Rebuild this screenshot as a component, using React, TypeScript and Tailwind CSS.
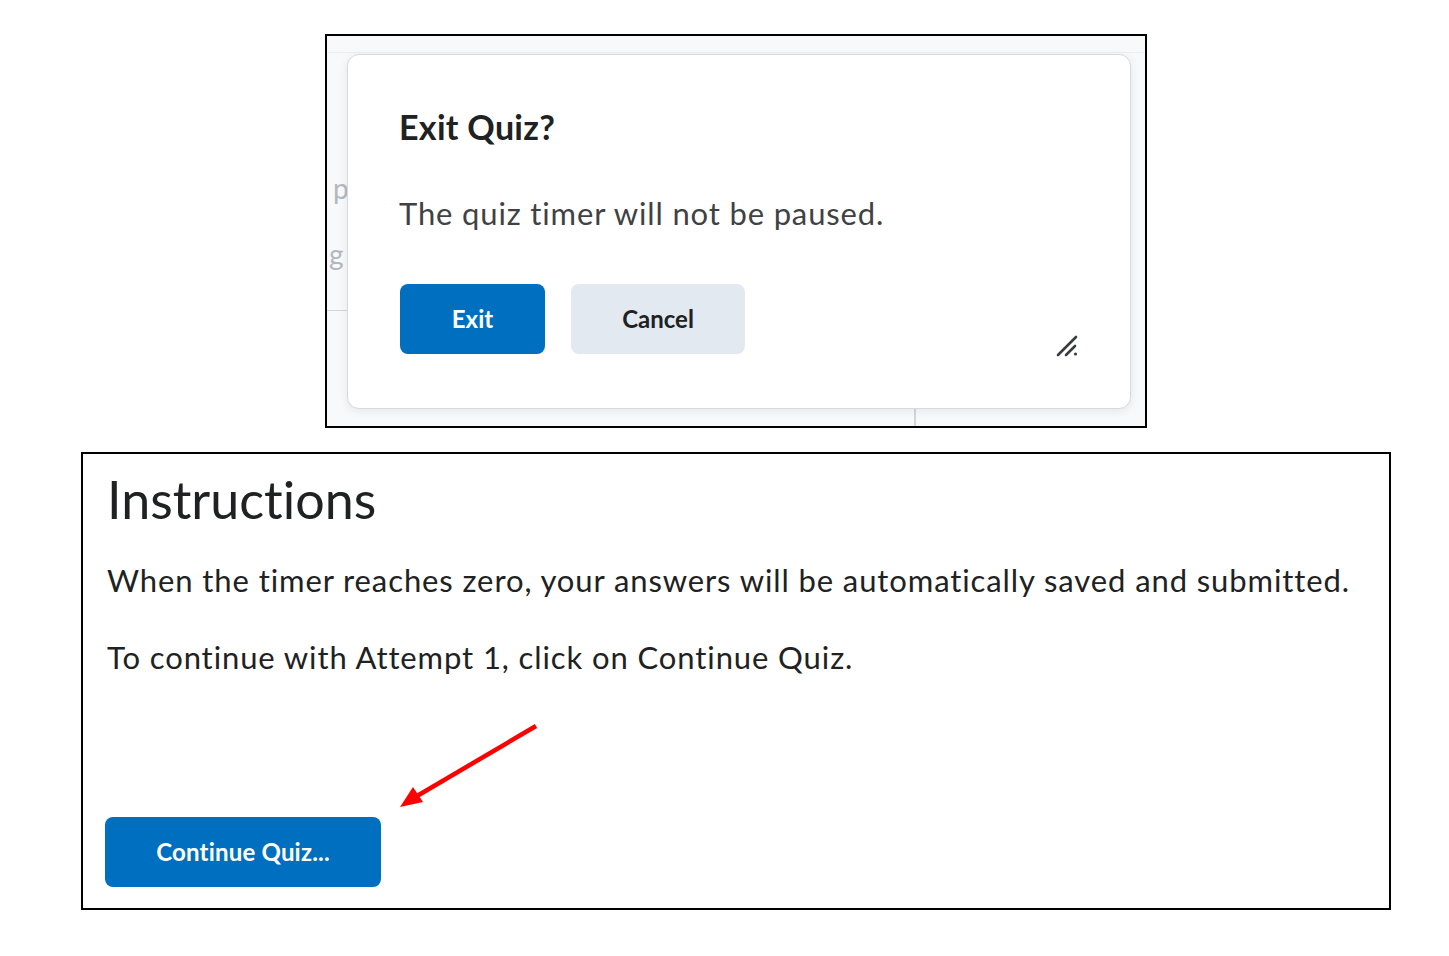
import React from "react";

const FONT = { fontFamily: "Lato, 'Open Sans', sans-serif" };

function ResizeGrip() {
  return (
    <svg width="24" height="24" viewBox="0 0 24 24" className="text-[#3a3d40]">
      <path d="M2 21 L20 3" stroke="currentColor" strokeWidth="2.6" strokeLinecap="round" />
      <path d="M10 21 L19 12" stroke="currentColor" strokeWidth="2.6" strokeLinecap="round" />
      <circle cx="19.5" cy="20" r="1.6" fill="currentColor" />
    </svg>
  );
}

// the greyed page that sits behind the modal
function Backdrop() {
  return (
    <div className="absolute inset-0 flex flex-col">
      <div className="h-[17px] border-b border-[#eceef1]" />
      <div className="flex flex-1">
        <div className="flex w-[24px] flex-col">
          <div className="h-[258px] border-b border-[#d3d7dc] pl-[6px] pt-[117px] text-[28px] leading-[36px] text-[#b3b8bf]">
            <div>p</div>
            <div className="-ml-[4px] mt-[30px]">g</div>
          </div>
        </div>
        <div className="flex flex-1 items-end">
          <div className="ml-[563px] h-[24px] w-[2px] bg-[#d3d7dc]" />
        </div>
      </div>
    </div>
  );
}

function ExitDialogShot() {
  return (
    <div className="relative ml-[325px] mt-[34px] h-[394px] w-[822px] overflow-hidden border-2 border-black bg-[#f8f9fb] pl-[20px] pt-[18px]">
      <Backdrop />
      <div className="relative flex h-[355px] w-[784px] flex-col rounded-[12px] border border-[#d5dae0] bg-white pl-[51px] pt-[50px] shadow-[0_2px_10px_rgba(0,0,0,0.08)] [font-variant-ligatures:none]">
        <h2 className="text-[34px] font-bold leading-[44px] tracking-[0.3px] text-[#202122]">Exit Quiz?</h2>
        <p className="mt-[44px] text-[31px] leading-[40px] tracking-[0.85px] text-[#3f4245]">The quiz timer will not be paused.</p>
        <div className="ml-[1px] mt-[51px] flex items-center gap-[26px]">
          <button className="h-[70px] w-[145px] rounded-[8px] bg-[#006fbf] text-[24px] font-bold text-white">Exit</button>
          <button className="h-[70px] w-[174px] rounded-[8px] bg-[#e3e9f1] text-[24px] font-bold text-[#202122]">Cancel</button>
        </div>
        <div className="absolute bottom-[50px] right-[50px]">
          <ResizeGrip />
        </div>
      </div>
    </div>
  );
}

function InstructionsShot() {
  return (
    <div className="relative ml-[81px] mt-[24px] flex h-[458px] w-[1310px] flex-col items-start border-2 border-black bg-white pl-[24px] pt-[14px] text-[#202122] [font-variant-ligatures:none]">
      <h1 className="text-[52px] leading-[62px]">Instructions</h1>
      <p className="mt-[30px] text-[31px] leading-[40px] tracking-[0.9px]">
        When the timer reaches zero, your answers will be automatically saved and submitted.
      </p>
      <p className="mt-[37px] text-[31px] leading-[40px] tracking-[0.9px]">
        To continue with Attempt 1, click on Continue Quiz.
      </p>
      <button className="mt-[140px] -ml-[2px] h-[70px] w-[276px] rounded-[8px] bg-[#006fbf] text-[24px] font-bold tracking-[0.2px] text-white">
        Continue Quiz...
      </button>
      {/* annotation arrow */}
      <svg className="absolute left-[300px] top-[260px]" width="180" height="110" viewBox="0 0 180 110">
        <line x1="153" y1="12" x2="34" y2="82" stroke="#ff0000" strokeWidth="4.5" />
        <polygon points="17,93 30,73 40,88" fill="#ff0000" />
      </svg>
    </div>
  );
}

export default function App() {
  return (
    <div className="h-[956px] w-[1449px] overflow-hidden bg-white" style={FONT}>
      <ExitDialogShot />
      <InstructionsShot />
    </div>
  );
}
